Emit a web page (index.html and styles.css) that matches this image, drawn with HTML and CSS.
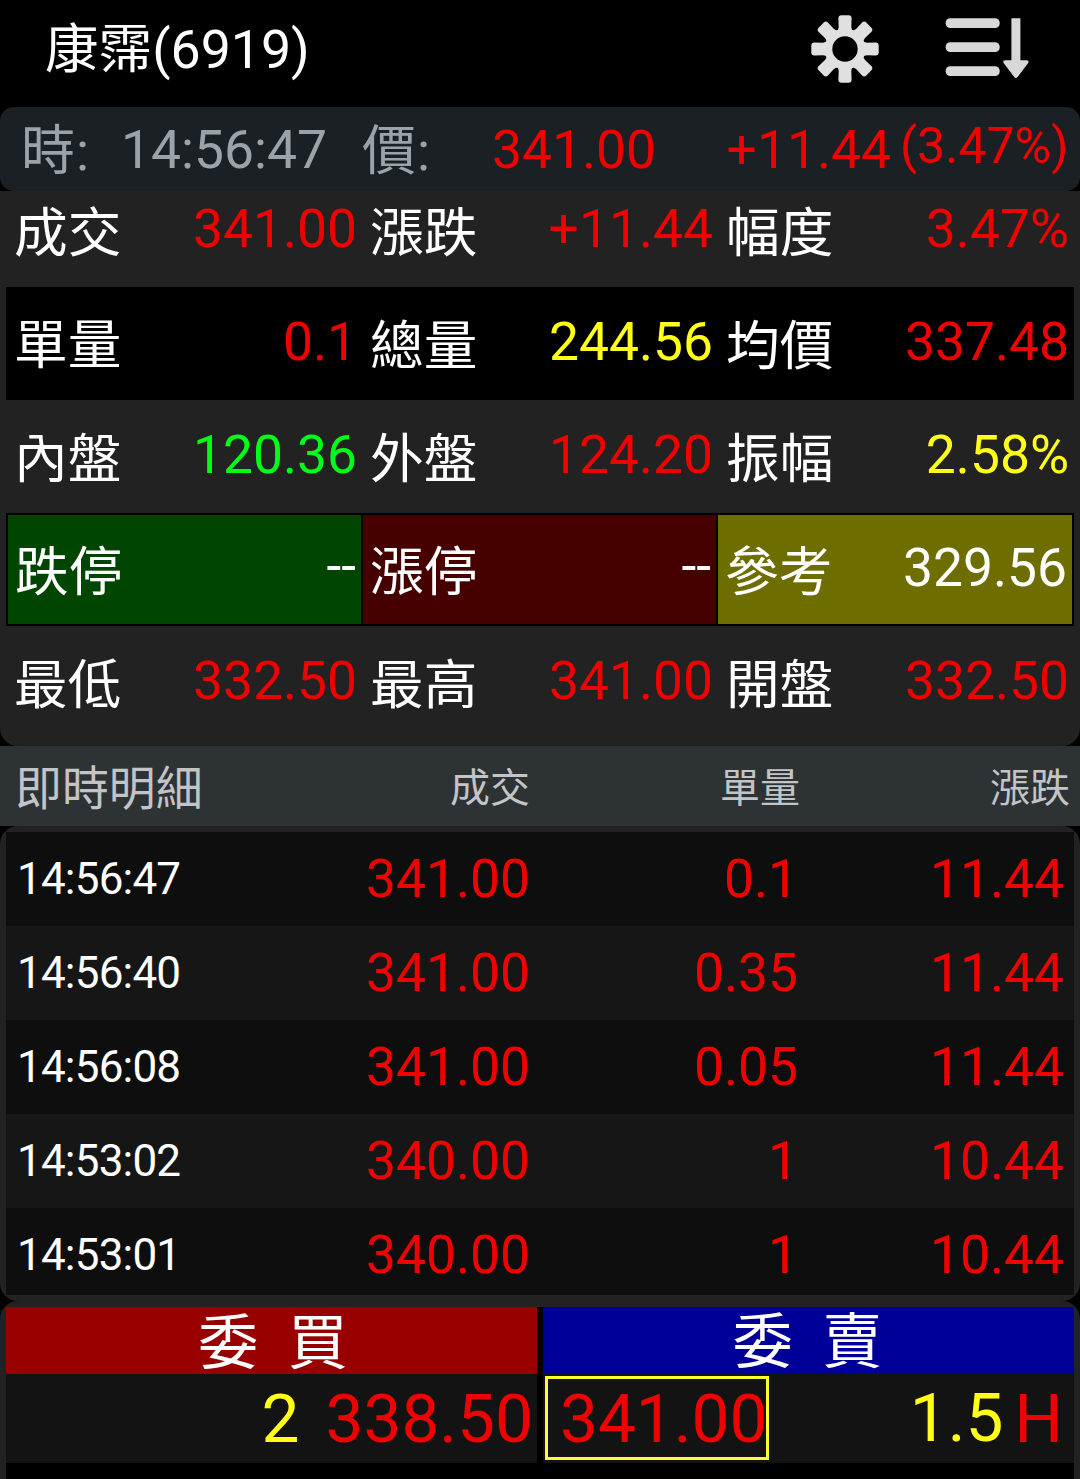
FILE: index.html
```html
<!DOCTYPE html>
<html lang="zh-Hant">
<head>
    <meta charset="UTF-8">
    <meta name="viewport" content="width=device-width, initial-scale=1.0">
    <title>康霈(6919)</title>
    <link rel="stylesheet" href="styles.css">
</head>
<body>
    <header class="top">
        <h1>康霈(6919)</h1>
        <svg class="gear" viewBox="-34 -34 68 68">
            <g fill="#e0e0e0">
                <g id="teeth">
                    <path id="tooth" d="M-8.4 -17 Q-6.4 -19.5 -6.3 -22 L-6.6 -30.5 Q-6.6 -33.7 -3.6 -33.7 H3.6 Q6.6 -33.7 6.6 -30.5 L6.3 -22 Q6.4 -19.5 8.4 -17 Z"/>
                    <use href="#tooth" transform="rotate(45)"/>
                    <use href="#tooth" transform="rotate(90)"/>
                    <use href="#tooth" transform="rotate(135)"/>
                </g>
                <use href="#teeth" transform="rotate(180)"/>
            </g>
            <circle r="16.5" fill="none" stroke="#e0e0e0" stroke-width="7.6"/>
        </svg>
        <svg class="sort" viewBox="0 0 84 62">
            <g fill="#d8d8d8">
                <rect x="0.7" y="1.3" width="54" height="9.7" rx="4.5"/>
                <rect x="0.7" y="25.3" width="54" height="9.7" rx="4.5"/>
                <rect x="0.7" y="49.3" width="54" height="9.7" rx="4.5"/>
                <path d="M66.4 1.2 H75.4 V43.3 H82 Q84.6 44 83 46.3 L72.6 60 Q70.9 62 69.2 60 L58.8 46.3 Q57.2 44 60 43.3 H66.4 Z"/>
            </g>
        </svg>
    </header>

    <section class="status">
        <span class="status-label">時:</span>
        <span class="status-time">14:56:47</span>
        <span class="status-label">價:</span>
        <span class="status-price">341.00</span>
        <span class="status-diff">+11.44</span>
        <span class="status-rate">(3.47%)</span>
    </section>

    <section class="stats">
        <div class="stats-row">
            <div class="cell"><span>成交</span><b>341.00</b></div>
            <div class="cell"><span>漲跌</span><b>+11.44</b></div>
            <div class="cell"><span>幅度</span><b>3.47%</b></div>
        </div>
        <div class="stats-row dark">
            <div class="cell raised"><span>單量</span><b>0.1</b></div>
            <div class="cell"><span>總量</span><b class="yellow">244.56</b></div>
            <div class="cell"><span>均價</span><b>337.48</b></div>
        </div>
        <div class="stats-row">
            <div class="cell"><span>內盤</span><b class="green">120.36</b></div>
            <div class="cell"><span>外盤</span><b>124.20</b></div>
            <div class="cell"><span>振幅</span><b class="yellow">2.58%</b></div>
        </div>
        <div class="stats-row limits">
            <div class="cell limit-down"><span>跌停</span><b class="none">--</b></div>
            <div class="cell limit-up"><span>漲停</span><b class="none">--</b></div>
            <div class="cell reference"><span>參考</span><b>329.56</b></div>
        </div>
        <div class="stats-row">
            <div class="cell"><span>最低</span><b>332.50</b></div>
            <div class="cell"><span>最高</span><b>341.00</b></div>
            <div class="cell"><span>開盤</span><b>332.50</b></div>
        </div>
    </section>

    <section class="ticks-head">
        <h2>即時明細</h2>
        <span>成交</span>
        <span>單量</span>
        <span>漲跌</span>
    </section>

    <section class="ticks">
        <div class="tick"><time>14:56:47</time><span>341.00</span><span>0.1</span><span>11.44</span></div>
        <div class="tick"><time>14:56:40</time><span>341.00</span><span>0.35</span><span>11.44</span></div>
        <div class="tick"><time>14:56:08</time><span>341.00</span><span>0.05</span><span>11.44</span></div>
        <div class="tick"><time>14:53:02</time><span>340.00</span><span>1</span><span>10.44</span></div>
        <div class="tick"><time>14:53:01</time><span>340.00</span><span>1</span><span>10.44</span></div>
    </section>

    <section class="orders">
        <div class="side buy">
            <h3>委  買</h3>
            <div class="order">
                <span class="qty">2</span>
                <span class="price">338.50</span>
            </div>
        </div>
        <div class="side sell">
            <h3>委  賣</h3>
            <div class="order">
                <span class="price last">341.00</span>
                <span class="qty">1.5</span>
                <span class="mark">H</span>
            </div>
        </div>
    </section>
</body>
</html>
```
FILE: styles.css
```css
* {
    box-sizing: border-box;
}
body {
    margin: 0;
    width: 1080px;
    height: 1479px;
    overflow: hidden;
    background: #000;
    color: #fff;
    font-family: Roboto, "Noto Sans CJK TC", sans-serif;
    font-size: 53.4px;
    display: flex;
    flex-direction: column;
}
h1, h2, h3, b {
    margin: 0;
    font-weight: normal;
}
.top {
    height: 107px;
    flex: none;
    display: flex;
    align-items: flex-start;
    padding-left: 45px;
}
.top h1 {
    width: 765.6px;
    font-size: 53.6px;
    line-height: 99px;
    height: 107px;
}
.gear {
    width: 68px;
    height: 68px;
    margin-top: 14.5px;
}
.sort {
    width: 84px;
    height: 62px;
    margin: 17px 0 0 66.4px;
}

/* status bar */
.status {
    height: 84px;
    flex: none;
    display: flex;
    border-radius: 14px;
    background: #1a2024;
    color: #9ba3a8;
    line-height: 86px;
    padding-left: 21px;
}
.status-label {
    width: 99px;
    padding-top: 2px;
    font-size: 54px;
    letter-spacing: 1px;
    line-height: 86px;
}
.status-time {
    width: 242px;
    padding-left: 1px;
}
.status-price {
    width: 195px;
    text-align: right;
    color: #f00000;
}
.status-diff {
    width: 235px;
    text-align: right;
    color: #f00000;
}
.status-rate {
    padding-left: 9px;
    font-size: 50px;
    line-height: 78px;
    color: #f00000;
}

/* quote table */
.stats {
    height: 555px;
    flex: none;
    display: flex;
    flex-direction: column;
    justify-content: flex-end;
    overflow: hidden;
    padding: 0 6px 7px;
    background: #222;
    border-radius: 0 0 18px 18px;
}
.stats-row {
    height: 113px;
    flex: none;
    display: grid;
    grid-template-columns: 356px 356px 356px;
}
.stats-row.dark {
    background: #000;
}
.cell {
    display: flex;
    justify-content: space-between;
    padding: 0 5px 0 8px;
    overflow: hidden;
}
.cell span {
    font-family: "Noto Sans CJK TC", sans-serif;
    font-size: 53.7px;
    line-height: 110px;
}
.cell.raised span {
    line-height: 108px;
}
.cell b {
    color: #f00000;
    line-height: 109px;
}
.cell b.yellow {
    color: #ffff18;
}
.cell b.green {
    color: #00ff18;
}
.stats-row.limits {
    grid-template-columns: 353px 353px 354px;
    gap: 2px;
    padding: 2px;
    background: #000;
}
.limits .cell {
    padding: 0 5px 0 7px;
}
.limits .cell span {
    line-height: 106px;
}
.limits .cell b {
    color: #fff;
    line-height: 105px;
}
.limits .cell b.none {
    line-height: 101px;
}
.limit-down {
    background: #004600;
}
.limit-up {
    background: #460000;
}
.reference {
    background: #6e6e00;
}

/* tick list */
.ticks-head {
    height: 80px;
    flex: none;
    display: grid;
    grid-template-columns: 260px 270px 270px 270px;
    background: #2d3235;
    color: #c2c4c6;
    font-family: "Noto Sans CJK TC", sans-serif;
}
.ticks-head h2 {
    padding-left: 15px;
    font-size: 46.9px;
    line-height: 78px;
}
.ticks-head span {
    font-size: 40px;
    line-height: 78px;
    text-align: right;
}
.ticks {
    height: 475px;
    flex: none;
    padding: 6px;
    background: #222;
    border-radius: 18px;
}
.tick {
    height: 94px;
    display: grid;
    grid-template-columns: 254px 270px 268px 266px;
    line-height: 94px;
    color: #f00000;
    text-align: right;
    background: #0e0e0e;
}
.tick:nth-child(even) {
    background: #161616;
}
.tick:last-child {
    height: 87px;
}
.tick time {
    padding-left: 11px;
    font-size: 44px;
    letter-spacing: -0.8px;
    line-height: 94px;
    text-align: left;
    color: #fff;
}

/* best bid and ask */
.orders {
    height: 200px;
    flex: none;
    display: grid;
    grid-template-columns: 531px 531px;
    gap: 6px;
    background: linear-gradient(#222 6px, #000 6px) no-repeat 6px 0 / 1068px 200px, #222;
    padding: 6px;
    border-radius: 18px;
}
.side h3 {
    height: 67px;
    font-size: 60px;
    white-space: pre;
    text-align: center;
}
.buy h3 {
    padding-left: 3px;
    line-height: 73px;
    background: #980000;
}
.sell h3 {
    padding-right: 2px;
    line-height: 71px;
    background: #000098;
}
.order {
    height: 89px;
    display: flex;
    background: #131313;
    font-size: 67.5px;
    line-height: 90px;
}
.buy .order {
    justify-content: flex-end;
    padding-right: 4px;
}
.order .price {
    color: #f00000;
}
.order .qty {
    color: #ffff18;
}
.buy .qty {
    margin-right: 26px;
}
.order .last {
    width: 224px;
    height: 84px;
    margin: 2px 0 0 2px;
    padding-left: 12px;
    border: 3px solid #ffff30;
    line-height: 80px;
}
.sell .qty {
    width: 234.5px;
    text-align: right;
    line-height: 88px;
}
.order .mark {
    padding-left: 11px;
    color: #f00000;
}
```
